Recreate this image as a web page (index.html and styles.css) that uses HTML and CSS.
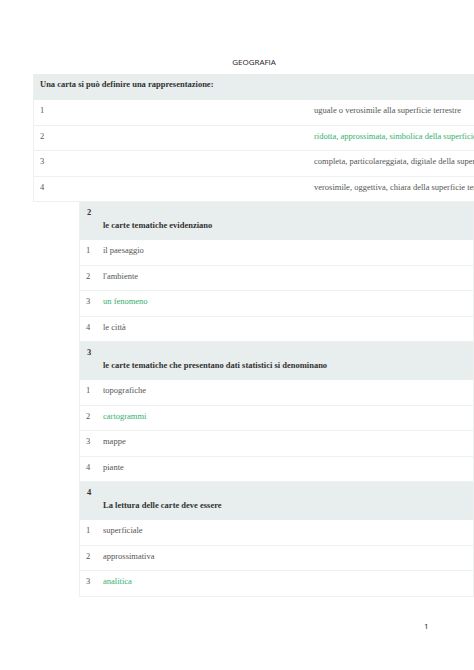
FILE: index.html
```html
<!DOCTYPE html>
<html lang="it">
<head>
  <meta charset="UTF-8" />
  <meta name="viewport" content="width=device-width, initial-scale=1.0"/>
  <title>Geografia</title>
  <link rel="stylesheet" href="styles.css">
</head>
<body>
  <div class="page">
    <h1 class="title">GEOGRAFIA</h1>

    <div class="intro">
      <div class="intro-head">Una carta si può definire una rappresentazione:</div>
      <div class="intro-row"><span class="num">1</span><span class="ans">uguale o verosimile alla superficie terrestre</span></div>
      <div class="intro-row"><span class="num">2</span><span class="ans ok">ridotta, approssimata, simbolica della superficie terrestre</span></div>
      <div class="intro-row"><span class="num">3</span><span class="ans">completa, particolareggiata, digitale della superficie terrestre</span></div>
      <div class="intro-row"><span class="num">4</span><span class="ans">verosimile, oggettiva, chiara della superficie terrestre</span></div>
    </div>

    <div class="quiz">
      <div class="q-head">
        <span class="q-num">2</span>
        <span class="q-text">le carte tematiche evidenziano</span>
      </div>
      <div class="q-row"><span class="num">1</span><span>il paesaggio</span></div>
      <div class="q-row"><span class="num">2</span><span>l'ambiente</span></div>
      <div class="q-row"><span class="num">3</span><span class="ok">un fenomeno</span></div>
      <div class="q-row"><span class="num">4</span><span>le città</span></div>

      <div class="q-head">
        <span class="q-num">3</span>
        <span class="q-text">le carte tematiche che presentano dati statistici si denominano</span>
      </div>
      <div class="q-row"><span class="num">1</span><span>topografiche</span></div>
      <div class="q-row"><span class="num">2</span><span class="ok">cartogrammi</span></div>
      <div class="q-row"><span class="num">3</span><span>mappe</span></div>
      <div class="q-row"><span class="num">4</span><span>piante</span></div>

      <div class="q-head">
        <span class="q-num">4</span>
        <span class="q-text">La lettura delle carte deve essere</span>
      </div>
      <div class="q-row"><span class="num">1</span><span>superficiale</span></div>
      <div class="q-row"><span class="num">2</span><span>approssimativa</span></div>
      <div class="q-row"><span class="num">3</span><span class="ok">analitica</span></div>
    </div>

    <div class="page-num">1</div>
  </div>
</body>
</html>
```

FILE: styles.css
```css
body {
  margin: 0;
  background: #fff;
  overflow: hidden;
  font-family: "Liberation Serif", "Times New Roman", serif;
  font-size: 8.5px;
  color: #555;
}

.page {
  width: 442px;
  padding: 55px 0 0 33px;
}

.title {
  margin: 0 0 6px;
  font-family: "Open Sans", "Liberation Sans", sans-serif;
  font-size: 8px;
  font-weight: normal;
  line-height: 13px;
  color: #222;
  text-align: center;
}

.intro {
  width: 442px;
  border-left: 1px solid #eef0f0;
  white-space: nowrap;
}

.intro-head {
  background: #e8eded;
  padding: 4px 6px 9px;
  line-height: 13px;
  font-weight: bold;
  color: #333;
}

.intro-row {
  display: grid;
  grid-template-columns: 274px 1fr;
  padding: 4px 6px 7.5px;
  line-height: 13px;
  border-bottom: 1px solid #eef0f0;
  overflow: hidden;
}

.ok {
  color: #34b06e;
}

.quiz {
  margin-left: 46px;
  width: 393px;
  border-left: 1px solid #eef0f0;
  border-right: 1px solid #eef0f0;
}

.q-head {
  display: grid;
  grid-template-columns: 23px 1fr;
  grid-template-rows: 13px 13px;
  background: #e8eded;
  padding: 4px 0 8px;
  line-height: 13px;
  font-weight: bold;
  color: #333;
}

.q-num {
  padding-left: 7px;
}

.q-text {
  grid-column: 2;
  grid-row: 2;
}

.q-row {
  display: grid;
  grid-template-columns: 23px 1fr;
  padding: 4px 0 7.5px;
  line-height: 13px;
  border-bottom: 1px solid #eef0f0;
}

.q-row .num {
  padding-left: 6px;
}

.page-num {
  margin: 22px 0 0 391px;
  font-family: "Open Sans", "Liberation Sans", sans-serif;
  font-size: 8px;
  line-height: 13px;
  color: #222;
}
```
